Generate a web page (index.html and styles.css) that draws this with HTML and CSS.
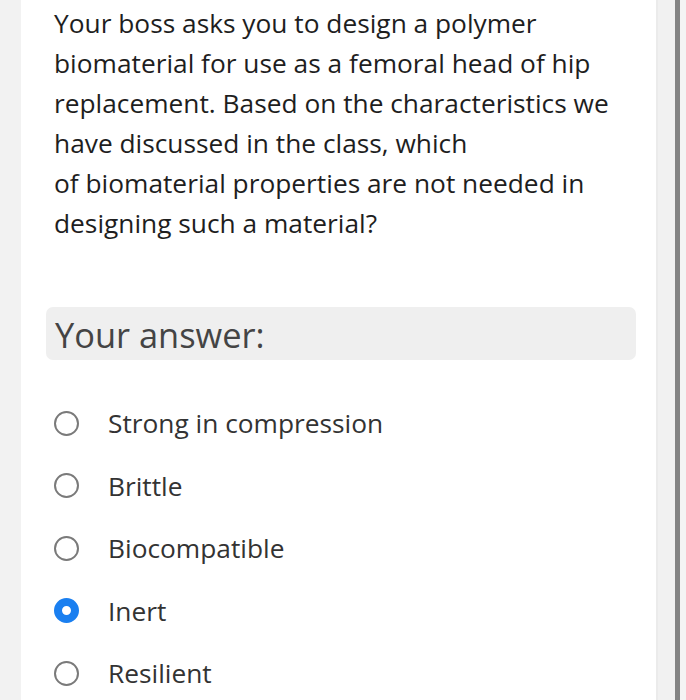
FILE: index.html
```html
<!DOCTYPE html>
<html>
<head>
<meta charset="utf-8">
<link rel="stylesheet" href="styles.css">
</head>
<body>
<div class="page">
  <div class="gutter-left"></div>
  <main class="card">
    <p class="question">Your boss asks you to design a polymer<br>biomaterial for use as a femoral head of hip<br>replacement. Based on the characteristics we<br>have discussed in the class, which<br>of biomaterial properties are not needed in<br>designing such a material?</p>
    <div class="answer-label">Your answer:</div>
    <ul class="options">
      <li class="option"><span class="radio"></span><span class="label">Strong in compression</span></li>
      <li class="option"><span class="radio"></span><span class="label">Brittle</span></li>
      <li class="option"><span class="radio"></span><span class="label">Biocompatible</span></li>
      <li class="option"><span class="radio checked"></span><span class="label">Inert</span></li>
      <li class="option"><span class="radio"></span><span class="label">Resilient</span></li>
    </ul>
  </main>
  <div class="gutter-right"></div>
  <div class="divider"></div>
  <div class="edge"></div>
</div>
</body>
</html>
```
FILE: styles.css
```css
html, body {
  margin: 0;
  padding: 0;
  background: #f2f2f2;
}
.page {
  display: grid;
  grid-template-columns: 21px 637px 17px 5px 6px;
  width: 686px;
  height: 700px;
  overflow: hidden;
  font-family: "Open Sans", "Noto Sans", sans-serif;
}
.gutter-left {
  background: #f2f2f2;
}
.card {
  background: #ffffff;
  border-right: 2px solid #ebebeb;
  box-sizing: border-box;
  min-width: 0;
}
.gutter-right {
  background: #f1f1f1;
}
.divider {
  background: #848484;
}
.edge {
  background: #f4f4f4;
}
.question {
  margin: 0;
  padding: 3px 0 0 33px;
  font-size: 26.3px;
  line-height: 40px;
  color: #1e1e1e;
}
.answer-label {
  margin: 64px 20px 0 25px;
  height: 53px;
  background: #efefef;
  border-radius: 7px;
  padding-left: 9px;
  font-size: 34.4px;
  line-height: 55px;
  color: #444444;
}
.options {
  list-style: none;
  margin: 32px 0 0 0;
  padding: 0 0 0 33px;
}
.option {
  display: flex;
  align-items: center;
  height: 62.5px;
}
.radio {
  width: 25px;
  height: 25px;
  box-sizing: border-box;
  border: 2.5px solid #7a7a7a;
  border-radius: 50%;
  flex: none;
}
.radio.checked {
  border: 8px solid #1a7ff0;
}
.label {
  margin-left: 29px;
  font-size: 26.3px;
  color: #333333;
}
```
